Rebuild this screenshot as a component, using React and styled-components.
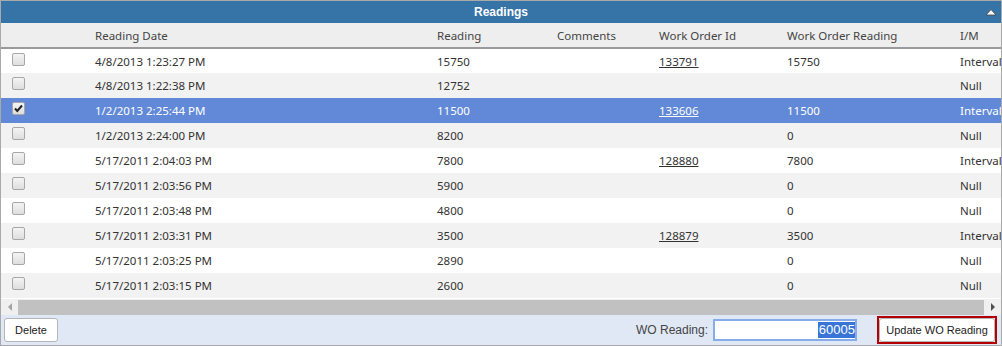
import React from "react";
import styled, { createGlobalStyle } from "styled-components";

const Global = createGlobalStyle`
  html, body { margin: 0; padding: 0; background: #fff; }
  body { font-family: "Noto Sans", "Open Sans", sans-serif; }
`;

const Panel = styled.div`
  width: 1002px;
  height: 346px;
  box-sizing: border-box;
  border: 1px solid #a9a9a9;
  display: flex;
  flex-direction: column;
  overflow: hidden;
`;

const TitleBar = styled.div`
  height: 22px;
  background: #3674a8;
  color: #fff;
  font: bold 12px "Liberation Sans", Arial, sans-serif;
  display: flex;
  align-items: center;
  justify-content: center;
  position: relative;
`;

const Collapse = styled.svg`
  position: absolute;
  right: 4px;
  top: 7px;
`;

const GridWrap = styled.div`
  height: 276px;
  overflow: hidden;
`;

const Table = styled.table`
  border-collapse: collapse;
  table-layout: fixed;
  width: 1080px;
  font-family: "Noto Sans", sans-serif;
  font-size: 11.5px;
  color: #333;
`;

const Th = styled.th`
  height: 24px;
  background: #eeeeee;
  border-bottom: 2px solid #9a9a9a;
  text-align: left;
  font-weight: normal;
  color: #444;
  padding: 0 0 0 8px;
  white-space: nowrap;
`;

const Tr = styled.tr`
  height: 25px;
  background: ${(p) => (p.$sel ? "#6189d7" : p.$alt ? "#f2f2f2" : "#ffffff")};
  color: ${(p) => (p.$sel ? "#fff" : "#333")};
`;

const Td = styled.td`
  padding: 0 0 0 8px;
  white-space: nowrap;
  overflow: hidden;
`;

const CheckCell = styled.td`
  padding: 0 0 0 11px;
`;

const Box = styled.span`
  display: block;
  width: 11px;
  height: 11px;
  border: 1px solid #a7a7a7;
  border-radius: 2px;
  background: linear-gradient(#f4f4f4, #dedede);
  position: relative;
  top: -2px;
`;

const Link = styled.a`
  color: inherit;
  text-decoration: underline;
`;

const ScrollBar = styled.div`
  height: 16px;
  background: #f0f0f0;
  display: flex;
  align-items: center;
`;

const Arrow = styled.div`
  width: 17px;
  display: flex;
  justify-content: center;
`;

const Thumb = styled.div`
  flex: 1;
  height: 15px;
  background: #c1c1c1;
`;

const Footer = styled.div`
  flex: 1;
  background: #e1e8f5;
  display: flex;
  align-items: center;
  padding: 0 4px 0 3px;
  font: 12px "Liberation Sans", Arial, sans-serif;
  color: #333;
`;

const Btn = styled.button`
  height: 24px;
  padding: 0;
  background: #fff;
  border: 1px solid #b5b5b5;
  border-radius: 3px;
  font: 11px "Liberation Sans", Arial, sans-serif;
  color: #222;
  white-space: nowrap;
  width: ${(p) => p.$w}px;
`;

const Spacer = styled.div`
  flex: 1;
`;

const Label = styled.label`
  margin-right: 5px;
  color: #444;
`;

const Input = styled.div`
  width: 140px;
  height: 18px;
  border: 2px solid #86acea;
  background: #fff;
  display: flex;
  align-items: center;
  justify-content: flex-end;
  margin-right: 20px;
  font: 13px "Liberation Sans", Arial, sans-serif;
`;

const Selected = styled.span`
  background: #3875d7;
  color: #fff;
  padding: 0 0 0 1px;
  line-height: 16px;
`;

const Focus = styled.div`
  border: 2px solid #b30000;
  padding: 0;
  height: 24px;
  display: flex;
`;

const cols = [86, 342, 120, 102, 128, 173, 140];

const rows = [
  ["4/8/2013 1:23:27 PM", "15750", "", "133791", "15750", "Interval"],
  ["4/8/2013 1:22:38 PM", "12752", "", "", "", "Null"],
  ["1/2/2013 2:25:44 PM", "11500", "", "133606", "11500", "Interval"],
  ["1/2/2013 2:24:00 PM", "8200", "", "", "0", "Null"],
  ["5/17/2011 2:04:03 PM", "7800", "", "128880", "7800", "Interval"],
  ["5/17/2011 2:03:56 PM", "5900", "", "", "0", "Null"],
  ["5/17/2011 2:03:48 PM", "4800", "", "", "0", "Null"],
  ["5/17/2011 2:03:31 PM", "3500", "", "128879", "3500", "Interval"],
  ["5/17/2011 2:03:25 PM", "2890", "", "", "0", "Null"],
  ["5/17/2011 2:03:15 PM", "2600", "", "", "0", "Null"],
];

const Check = ({ on }) => (
  <Box>
    {on && (
      <svg width="11" height="11" viewBox="0 0 11 11" style={{ position: "absolute", left: 0, top: 0 }}>
        <path d="M2 5.5 L4.3 8 L9 2.5" stroke="#222" strokeWidth="2" fill="none" />
      </svg>
    )}
  </Box>
);

export default function App() {
  return (
    <>
      <Global />
      <Panel>
        <TitleBar>
          Readings
          <Collapse width="12" height="8" viewBox="0 0 12 8">
            <polygon points="1,7 6,1.5 11,7" fill="#fff" stroke="#444" strokeWidth="0.8" />
          </Collapse>
        </TitleBar>
        <GridWrap>
          <Table>
            <colgroup>
              {cols.map((w, i) => (
                <col key={i} style={{ width: w }} />
              ))}
            </colgroup>
            <thead>
              <tr>
                <Th />
                <Th>Reading Date</Th>
                <Th>Reading</Th>
                <Th>Comments</Th>
                <Th>Work Order Id</Th>
                <Th>Work Order Reading</Th>
                <Th>I/M</Th>
              </tr>
            </thead>
            <tbody>
              {rows.map((r, i) => (
                <Tr key={i} $alt={i % 2 === 1} $sel={i === 2}>
                  <CheckCell>
                    <Check on={i === 2} />
                  </CheckCell>
                  <Td>{r[0]}</Td>
                  <Td>{r[1]}</Td>
                  <Td>{r[2]}</Td>
                  <Td>{r[3] && <Link>{r[3]}</Link>}</Td>
                  <Td>{r[4]}</Td>
                  <Td>{r[5]}</Td>
                </Tr>
              ))}
            </tbody>
          </Table>
        </GridWrap>
        <ScrollBar>
          <Arrow>
            <svg width="4" height="8" viewBox="0 0 4 8">
              <polygon points="4,0 0,4 4,8" fill="#a3a3a3" />
            </svg>
          </Arrow>
          <Thumb />
          <Arrow>
            <svg width="4" height="8" viewBox="0 0 4 8">
              <polygon points="0,0 4,4 0,8" fill="#505050" />
            </svg>
          </Arrow>
        </ScrollBar>
        <Footer>
          <Btn $w={54}>Delete</Btn>
          <Spacer />
          <Label>WO Reading:</Label>
          <Input>
            <Selected>60005</Selected>
          </Input>
          <Focus>
            <Btn $w={116}>Update WO Reading</Btn>
          </Focus>
        </Footer>
      </Panel>
    </>
  );
}
